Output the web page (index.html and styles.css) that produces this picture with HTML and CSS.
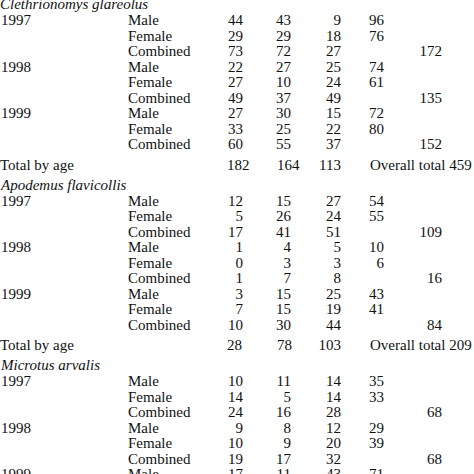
FILE: index.html
```html
<!DOCTYPE html>
<html>
<head>
<meta charset="utf-8">
<link rel="stylesheet" href="styles.css">
</head>
<body>
<div class="table">
  <div class="row species">Clethrionomys glareolus</div>
  <div class="row"><span>1997</span><span>Male</span><span class="n">44</span><span class="n">43</span><span class="n">9</span><span class="n">96</span><span class="n"></span></div>
  <div class="row"><span></span><span>Female</span><span class="n">29</span><span class="n">29</span><span class="n">18</span><span class="n">76</span><span class="n"></span></div>
  <div class="row"><span></span><span>Combined</span><span class="n">73</span><span class="n">72</span><span class="n">27</span><span class="n"></span><span class="n">172</span></div>
  <div class="row"><span>1998</span><span>Male</span><span class="n">22</span><span class="n">27</span><span class="n">25</span><span class="n">74</span><span class="n"></span></div>
  <div class="row"><span></span><span>Female</span><span class="n">27</span><span class="n">10</span><span class="n">24</span><span class="n">61</span><span class="n"></span></div>
  <div class="row"><span></span><span>Combined</span><span class="n">49</span><span class="n">37</span><span class="n">49</span><span class="n"></span><span class="n">135</span></div>
  <div class="row"><span>1999</span><span>Male</span><span class="n">27</span><span class="n">30</span><span class="n">15</span><span class="n">72</span><span class="n"></span></div>
  <div class="row"><span></span><span>Female</span><span class="n">33</span><span class="n">25</span><span class="n">22</span><span class="n">80</span><span class="n"></span></div>
  <div class="row"><span></span><span>Combined</span><span class="n">60</span><span class="n">55</span><span class="n">37</span><span class="n"></span><span class="n">152</span></div>
  <div class="row total"><span class="label">Total by age</span><span class="t1">182</span><span class="t2">164</span><span class="n">113</span><span class="overall">Overall total 459</span></div>

  <div class="row species">Apodemus flavicollis</div>
  <div class="row"><span>1997</span><span>Male</span><span class="n">12</span><span class="n">15</span><span class="n">27</span><span class="n">54</span><span class="n"></span></div>
  <div class="row"><span></span><span>Female</span><span class="n">5</span><span class="n">26</span><span class="n">24</span><span class="n">55</span><span class="n"></span></div>
  <div class="row"><span></span><span>Combined</span><span class="n">17</span><span class="n">41</span><span class="n">51</span><span class="n"></span><span class="n">109</span></div>
  <div class="row"><span>1998</span><span>Male</span><span class="n">1</span><span class="n">4</span><span class="n">5</span><span class="n">10</span><span class="n"></span></div>
  <div class="row"><span></span><span>Female</span><span class="n">0</span><span class="n">3</span><span class="n">3</span><span class="n">6</span><span class="n"></span></div>
  <div class="row"><span></span><span>Combined</span><span class="n">1</span><span class="n">7</span><span class="n">8</span><span class="n"></span><span class="n">16</span></div>
  <div class="row"><span>1999</span><span>Male</span><span class="n">3</span><span class="n">15</span><span class="n">25</span><span class="n">43</span><span class="n"></span></div>
  <div class="row"><span></span><span>Female</span><span class="n">7</span><span class="n">15</span><span class="n">19</span><span class="n">41</span><span class="n"></span></div>
  <div class="row"><span></span><span>Combined</span><span class="n">10</span><span class="n">30</span><span class="n">44</span><span class="n"></span><span class="n">84</span></div>
  <div class="row total"><span class="label">Total by age</span><span class="t1">28</span><span class="t2">78</span><span class="n">103</span><span class="overall">Overall total 209</span></div>

  <div class="row species">Microtus arvalis</div>
  <div class="row"><span>1997</span><span>Male</span><span class="n">10</span><span class="n">11</span><span class="n">14</span><span class="n">35</span><span class="n"></span></div>
  <div class="row"><span></span><span>Female</span><span class="n">14</span><span class="n">5</span><span class="n">14</span><span class="n">33</span><span class="n"></span></div>
  <div class="row"><span></span><span>Combined</span><span class="n">24</span><span class="n">16</span><span class="n">28</span><span class="n"></span><span class="n">68</span></div>
  <div class="row"><span>1998</span><span>Male</span><span class="n">9</span><span class="n">8</span><span class="n">12</span><span class="n">29</span><span class="n"></span></div>
  <div class="row"><span></span><span>Female</span><span class="n">10</span><span class="n">9</span><span class="n">20</span><span class="n">39</span><span class="n"></span></div>
  <div class="row"><span></span><span>Combined</span><span class="n">19</span><span class="n">17</span><span class="n">32</span><span class="n"></span><span class="n">68</span></div>
  <div class="row"><span>1999</span><span>Male</span><span class="n">17</span><span class="n">11</span><span class="n">43</span><span class="n">71</span><span class="n"></span></div>
</div>
</body>
</html>
```

FILE: styles.css
```css
html, body {
  margin: 0;
  padding: 0;
  background: #ffffff;
}
body {
  font-family: "Liberation Serif", "Times New Roman", serif;
  font-size: 15px;
  color: #111111;
  overflow: hidden;
  height: 474px;
}
.table {
  margin-top: -2.8px;
  padding-left: 1px;
}
.row {
  display: grid;
  grid-template-columns: 127px 72px 43px 48px 50px 43px 58px;
  line-height: 15.5px;
  height: 15.5px;
  white-space: nowrap;
}
.row .n {
  text-align: right;
}
.species {
  display: block;
  font-style: italic;
  margin-top: 4.5px;
  margin-bottom: 0.5px;
}
.species:first-child {
  margin-top: 0;
  margin-left: -1px;
}
.total {
  margin-top: 5px;
}
.total .label {
  grid-column: 1 / 3;
  margin-left: -1px;
}
.total .t1 {
  padding-left: 27px;
}
.total .t2 {
  padding-left: 34px;
}
.total .overall {
  grid-column: 6 / 8;
  padding-left: 29px;
  overflow: visible;
}
```
